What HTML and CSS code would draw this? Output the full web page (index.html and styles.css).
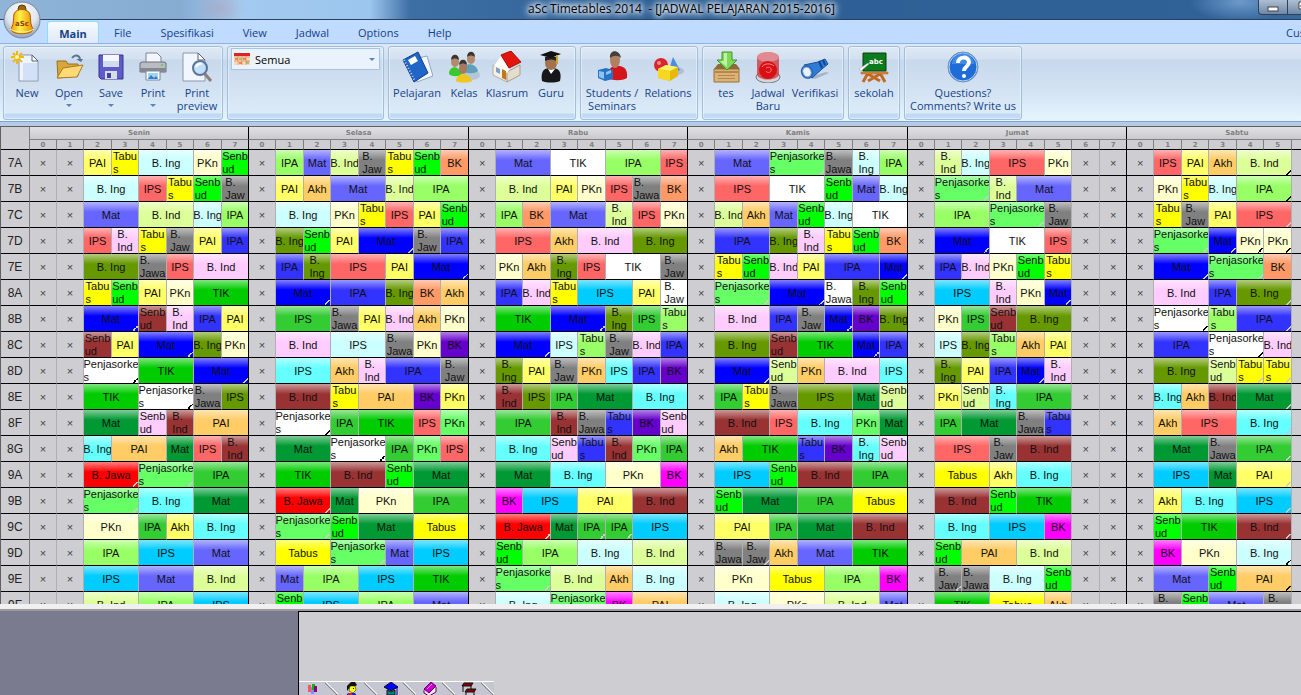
FILE: index.html
```html
<!DOCTYPE html>
<html lang="id">
<head>
  <meta charset="UTF-8">
  <meta name="viewport" content="width=device-width, initial-scale=1.0">
  <title>aSc Timetables 2014 - [JADWAL PELAJARAN 2015-2016]</title>
  <link rel="stylesheet" href="styles.css">
</head>
<body>
  <!-- Title bar -->
  <header class="titlebar">
    <span class="title">aSc Timetables 2014 &nbsp;- [JADWAL PELAJARAN 2015-2016]</span>
    <div class="window-buttons">
      <button aria-label="Minimize"><svg width="12" height="6"><rect x="1" y="1" width="10" height="4" fill="#fff" stroke="#444"/></svg></button>
      <button aria-label="Restore"><svg width="12" height="11"><path d="M3 1h8v7H3z M5 4h4v2H5z" fill="#fff" stroke="#444" fill-rule="evenodd"/></svg></button>
    </div>
  </header>

  <button class="app-button" aria-label="aSc">
    <svg width="38" height="38" viewBox="0 0 38 38">
      <defs>
        <radialGradient id="orb" cx=".5" cy=".3" r=".7"><stop offset="0" stop-color="#fff"/><stop offset=".6" stop-color="#dfe6ef"/><stop offset="1" stop-color="#8fa0b8"/></radialGradient>
        <linearGradient id="bell" x1="0" x2="1"><stop offset="0" stop-color="#f59a00"/><stop offset=".4" stop-color="#fff04a"/><stop offset="1" stop-color="#ee8a00"/></linearGradient>
      </defs>
      <circle cx="19" cy="19" r="18" fill="url(#orb)" stroke="#7a8597"/>
      <circle cx="19" cy="8" r="4" fill="#9a6a10" stroke="#5e3c00"/>
      <path d="M9 26C11 22 10 18 11 13C13 7 25 7 27 13C28 18 27 22 29 26C36 35 2 35 9 26Z" fill="url(#bell)" stroke="#b05a00"/>
      <path d="M7 28C14 32 25 32 31 28" fill="none" stroke="#fff3a0"/>
      <text x="19" y="25" text-anchor="middle" class="bell-text">aSc</text>
    </svg>
  </button>

  <!-- Ribbon tabs -->
  <nav class="tabs">
    <a href="#" class="tab active">Main</a>
    <a href="#" class="tab">File</a>
    <a href="#" class="tab">Spesifikasi</a>
    <a href="#" class="tab">View</a>
    <a href="#" class="tab">Jadwal</a>
    <a href="#" class="tab">Options</a>
    <a href="#" class="tab">Help</a>
    <a href="#" class="customize">Customize</a>
  </nav>

  <!-- Ribbon -->
  <div class="ribbon">
    <div class="group">
      <button class="tool">
        <svg viewBox="0 0 32 32"><path d="M8 4h13l6 6v20H8z" fill="#eef4ff" stroke="#8b97ad"/><path d="M12 12h14v17H12z" fill="#d3e1f8"/><path d="M21 4v6h6z" fill="#fff" stroke="#5a6270"/><path d="M6 0v13M0 6h13M2 2l9 9M11 2l-9 9" stroke="#f2b90c" stroke-width="2"/><circle cx="6" cy="6" r="2" fill="#fffbc0"/></svg>
        <span>New</span>
      </button>
      <button class="tool">
        <svg viewBox="0 0 32 32"><path d="M4 10h9l2 3h10v12L5 27z" fill="#d9a63a" stroke="#99701c"/><path d="M4 27L10 17l20-3-6 12z" fill="#ffd977" stroke="#a87a1e"/><path d="M19 7c3-4 7-3 8 1" fill="none" stroke="#5b7390" stroke-width="2"/><path d="M23 8h7l-2 3z" fill="#5b7390"/></svg>
        <span>Open</span><i class="caret"></i>
      </button>
      <button class="tool">
        <svg viewBox="0 0 32 32"><path d="M4 4h24v24H6l-2-2z" fill="#5f5cc9" stroke="#37348f"/><path d="M8 4h16v12H8z" fill="#f4f7ff"/><path d="M8 10h16v6H8z" fill="#cfdcf2"/><path d="M10 20h12v8H10z" fill="#d8dbe8"/><path d="M12 22h4v5h-4z" fill="#4543a0"/></svg>
        <span>Save</span><i class="caret"></i>
      </button>
      <button class="tool">
        <svg viewBox="0 0 32 32"><path d="M9 2h11l4 4v8H9z" fill="#f3f7fd" stroke="#7d8794"/><path d="M3 12l2-1h22l2 1v9H3z" fill="#b9bcc2" stroke="#6d7076"/><path d="M3 17h26v4H3z" fill="#85888f"/><path d="M9 20h14v9H9z" fill="#fff" stroke="#7d8794"/><path d="M11 22h10v6H11z" fill="#9fd4f5"/><path d="M11 28l3-4 3 3 2-2 2 3z" fill="#2f7fd0"/><circle cx="25" cy="14" r="1" fill="#56d040"/></svg>
        <span>Print</span><i class="caret"></i>
      </button>
      <button class="tool preview">
        <svg viewBox="0 0 32 32"><path d="M2 2h15l7 7v21H2z" fill="#f2f7ff" stroke="#8b97ad"/><path d="M17 2v7h7z" fill="#fff" stroke="#5a6270"/><path d="M24 23l6 7" stroke="#8a7f7c" stroke-width="3"/><circle cx="19" cy="17" r="7" fill="#bfdcfa" fill-opacity=".9" stroke="#5a7596" stroke-width="2"/><path d="M15 16c1-3 4-4 6-3" fill="none" stroke="#fff" stroke-width="2"/></svg>
        <span>Print<br>preview</span>
      </button>
    </div>

    <div class="group filter">
      <label class="combo">
        <svg viewBox="0 0 16 12"><path d="M0 0h16v12H0z" fill="#f6d9b8"/><path d="M0 0h16v3H0z" fill="#d8261e"/><path d="M1 5h3v2H1zM9 5h3v2H9zM5 9h3v2H5z" fill="#f0893c"/><path d="M5 5h3v2H5zM12 8h3v3h-3z" fill="#9fc77c"/><path d="M0 4h16M0 8h16M4 3v9M8 3v9M12 3v9" stroke="#e06a5a" stroke-width=".5"/></svg>
        <select aria-label="Filter"><option>Semua</option></select>
        <i class="caret"></i>
      </label>
    </div>

    <div class="group">
      <button class="tool pelajaran">
        <svg viewBox="0 0 32 32"><path d="M13 8l13-3 6 20-16 6z" fill="#f2f7fb" stroke="#8fa8bb"/><path d="M2 9L17 1l10 21-14 9z" fill="#1f66c6" stroke="#123f86"/><path d="M7 9l7-4 3 5-7 4z" fill="#fff"/><path d="M3 9l11 21" stroke="#b8d2f0" stroke-width="2" stroke-dasharray="1 2"/></svg>
        <span>Pelajaran</span>
      </button>
      <button class="tool">
        <svg viewBox="0 0 32 32"><ellipse cx="24" cy="24" rx="8" ry="5" fill="#8fa3b8" opacity=".4"/><path d="M15 20c0-9 13-9 15 0-3 3-12 3-15 0z" fill="#5f9fb8"/><ellipse cx="23" cy="8" rx="4" ry="5" fill="#b48a6c"/><path d="M19 6c0-7 8-7 8 0-3-2-5-2-8 0z" fill="#3a3531"/><path d="M1 23c0-9 10-9 13 0-3 3-10 3-13 0z" fill="#3bc72e"/><ellipse cx="7" cy="11" rx="4" ry="5" fill="#b48a6c"/><path d="M3 9c0-7 8-7 8 0-3-2-5-2-8 0z" fill="#3a3531"/><path d="M8 30c0-9 14-9 16 0-3 2-13 2-16 0z" fill="#f0c51c"/><ellipse cx="15" cy="17" rx="4" ry="6" fill="#a87a5c"/><path d="M11 14c0-7 8-7 8 0-3-2-5-2-8 0z" fill="#3a3531"/></svg>
        <span>Kelas</span>
      </button>
      <button class="tool klasrum">
        <svg viewBox="0 0 32 32"><path d="M2 14l14 7v10L2 24z" fill="#f6f1e6" stroke="#b5ad9b"/><path d="M16 21l13-7v10l-13 7z" fill="#e4ddcd" stroke="#a9a08c"/><path d="M3 15L10 5l9 13-3 4z" fill="#fffdf6"/><path d="M10 4l10-4 10 11-12 6z" fill="#e3160f" stroke="#a80d08"/><path d="M5 16l4 2v5l-4-2z" fill="#7fa3c8"/><path d="M11 18l4 2v9l-4-2z" fill="#c07a1c"/></svg>
        <span>Klasrum</span>
      </button>
      <button class="tool klasrum">
        <svg viewBox="0 0 32 32"><path d="M7 30c-2-12 5-14 9-12 4-2 12 0 9 12-5 2-13 2-18 0z" fill="#17171a"/><path d="M13 18l3 5 4-5z" fill="#fff"/><ellipse cx="16" cy="12" rx="6" ry="7" fill="#a2714e"/><path d="M10 6h12v4c-4-2-8-2-12 0z" fill="#222"/><path d="M5 4l11-4 10 3-10 4z" fill="#111"/><path d="M22 4v9" stroke="#caa52c" stroke-width="2"/></svg>
        <span>Guru</span>
      </button>
    </div>

    <div class="group">
      <button class="tool students">
        <svg viewBox="0 0 32 32"><path d="M12 27c-1-12 6-12 10-12 5 0 10 2 9 12-5 3-14 3-19 0z" fill="#d5151c"/><ellipse cx="19" cy="9" rx="5" ry="8" fill="#b18063"/><path d="M14 7c-1-9 10-9 11 0-3-3-7-3-11 0z" fill="#45403b"/><path d="M2 19l8-2 7 2v9l-8 2-7-3z" fill="#2673c4"/><path d="M3 20l5 1v7l-5-2zM10 21l5-2v3l-5 2z" fill="#8cc4ee"/></svg>
        <span>Students /<br>Seminars</span>
      </button>
      <button class="tool relations">
        <svg viewBox="0 0 32 32"><ellipse cx="24" cy="20" rx="8" ry="4" fill="#8fa3b8" opacity=".5"/><path d="M21 6l7 13c-4 3-9 2-11 0z" fill="#4a8ee0"/><circle cx="9" cy="14" r="7" fill="#d8262c"/><circle cx="7" cy="12" r="2" fill="#f08a8a"/><path d="M6 18l8-4 12 2v9l-8 5-12-3z" fill="#e6b90a"/><path d="M6 18l8-4 12 2-8 4z" fill="#fff06a"/><path d="M6 18l12 2v10l-12-3z" fill="#f8d720"/></svg>
        <span>Relations</span>
      </button>
    </div>

    <div class="group">
      <button class="tool">
        <svg viewBox="0 0 32 32"><path d="M4 18l4-5h18l4 5z" fill="#8d6a3c"/><path d="M4 18h25v13H4z" fill="#dcb377" stroke="#96703a"/><path d="M5 20h23v2H5zM8 24h17v1H8zM8 27h17v1H8z" fill="#b3884a"/><path d="M12 1h10v8h5L17 19 7 9h5z" fill="#7fd85a" stroke="#3a9a25"/><path d="M14 2h3v14l-7-6h4z" fill="#c0f2a0"/></svg>
        <span>tes</span>
      </button>
      <button class="tool">
        <svg viewBox="0 0 32 32"><ellipse cx="16" cy="26" rx="12" ry="6" fill="#d4d6da" stroke="#767a80"/><path d="M5 6c2-6 20-6 22 0v18c-3 6-19 6-22 0z" fill="#cf3a44" opacity=".8"/><ellipse cx="16" cy="6" rx="11" ry="5" fill="#df8b91"/><circle cx="16" cy="19" r="9" fill="#d90f14"/><path d="M10 16c2-4 9-4 12-1" stroke="#ff8d8d" fill="none"/><path d="M14 17c3-2 6 0 5 3-1 2-4 2-5 0" stroke="#f77" fill="none"/></svg>
        <span>Jadwal<br>Baru</span>
      </button>
      <button class="tool verifikasi">
        <svg viewBox="0 0 32 32"><path d="M8 27l19-6 3 1-14 6z" fill="#7c8da3" opacity=".5"/><path d="M5 14l14-3 7-3 3 5-6 5-10 9z" fill="#2f7bd6" stroke="#174f9c"/><path d="M20 10l3 7M24 9l2 5" stroke="#12468e" stroke-width="2"/><ellipse cx="8" cy="21" rx="6" ry="7" transform="rotate(-24 8 21)" fill="#2467b8"/><ellipse cx="8" cy="21" rx="4" ry="5" transform="rotate(-24 8 21)" fill="#e7f2fa" stroke="#87a8c4"/></svg>
        <span>Verifikasi</span>
      </button>
    </div>

    <div class="group">
      <button class="tool sekolah">
        <svg viewBox="0 0 32 32"><path d="M10 22l-5 9M22 22l5 9M10 30l12-7M22 30l-12-7" stroke="#c26a22" stroke-width="3"/><path d="M5 2h23v18H5z" fill="#0c7a1d" stroke="#0a3e10"/><path d="M3 21h27v2H3z" fill="#d98a3c" stroke="#a35c1c" stroke-width=".5"/><path d="M1 18l9-6 1 1-8 7z" fill="#fff" stroke="#999" stroke-width=".5"/><text x="18" y="13" text-anchor="middle" class="board-text">abc</text></svg>
        <span>sekolah</span>
      </button>
    </div>

    <div class="group">
      <button class="tool questions">
        <svg viewBox="0 0 32 32"><circle cx="16" cy="16" r="15" fill="#1d6cd8" stroke="#6f8fb8"/><circle cx="16" cy="16" r="14" fill="none" stroke="#b9d6f6"/><path d="M5 13a11 11 0 0 1 22 0z" fill="#5c9df0" opacity=".6"/><path d="M11 12c0-7 11-7 11-1 0 5-5 4-5 9" fill="none" stroke="#fff" stroke-width="4"/><circle cx="17" cy="25" r="2" fill="#fff"/></svg>
        <span>Questions?<br>Comments? Write us</span>
      </button>
    </div>
  </div>

  <!-- Timetable -->
  <main class="sheet">
    <table id="timetable"></table>
  </main>

  <!-- Bottom panels -->
  <footer class="bottom">
    <div class="detail"></div>
    <div class="tray">
      <div class="tray-tabs">
        <button aria-label="Cards"><svg width="12" height="12" viewBox="0 0 12 12"><path d="M1 3h3v7H1z" fill="#f55"/><path d="M4 5h3v7H4z" fill="#88f"/><path d="M5 2h3v6H5z" fill="#0b0"/><path d="M7 4h3v6H7z" fill="#808"/></svg></button>
        <button aria-label="Classes"><svg width="14" height="14" viewBox="0 0 14 14"><path d="M2 4l4-4h4l2 3-3 2H5L2 9z" fill="#111"/><path d="M5 4h5l1 4-3 3-4-2z" fill="#ff0" stroke="#111" stroke-width=".5"/><path d="M8 6h1v1H8z"/><path d="M1 14l2-3h7l2 3z" fill="#22c"/><path d="M3 11h4v3H4z" fill="#d22"/></svg></button>
        <button aria-label="Teachers"><svg width="16" height="14" viewBox="0 0 16 14"><path d="M1 5l7-5 7 5-7 4z" fill="#00f" stroke="#111"/><path d="M4 8l4 2 4-2v5H4z" fill="#088" stroke="#111"/><path d="M14 5v8" stroke="#00a"/></svg></button>
        <button aria-label="Subjects"><svg width="14" height="14" viewBox="0 0 14 14"><path d="M1 8l7-7 5 4v5l-7 4-5-3z" fill="#eee" stroke="#606"/><path d="M1 7l7-7 5 4-7 7z" fill="#c0c" stroke="#606"/><path d="M4 7l5-5" stroke="#f8f"/></svg></button>
        <button aria-label="Classrooms"><svg width="16" height="14" viewBox="0 0 16 14"><path d="M3 1h9l-2 3H1zM6 7h9l-2 3H4z" fill="#800" stroke="#111"/><path d="M2 4v6M10 4v3M5 10v4M13 10v4" stroke="#111"/></svg></button>
      </div>
    </div>
  </footer>

  <script src="script.js"></script>
</body>
</html>
```
FILE: styles.css
```css
* {
  box-sizing: border-box;
}

body {
  margin: 0;
  height: 100vh;
  display: flex;
  flex-direction: column;
  overflow: hidden;
  position: relative;
  font-family: "Open Sans", "Noto Sans", sans-serif;
  font-size: 11px;
  color: #15428b;
  background-color: #b5cae5;
}

button {
  font: inherit;
  color: inherit;
  padding: 0;
  border: none;
  background: none;
}

a {
  color: inherit;
  text-decoration: none;
}

/* Title bar */
.titlebar {
  flex: none;
  height: 20px;
  display: flex;
  justify-content: center;
  position: relative;
  border-bottom: 1px solid #2c3e58;
  background:
    radial-gradient(ellipse 26px 16px at 220px 8px, rgba(190, 150, 170, 0.4), transparent),
    radial-gradient(ellipse 50px 20px at 1240px 2px, rgba(150, 190, 235, 0.6), transparent),
    linear-gradient(90deg, #8fb4d8 0, #86acd2 180px, #a3caf0 240px, #9cc6ee 370px, #3d6fa5 410px, #2d5f96 700px, #306298 1230px, #376a9f 100%);
}

.title {
  color: #000;
  font-size: 12px;
  line-height: 18px;
  padding-left: 62px;
  text-shadow: 0 0 4px #fff, 0 0 6px #fff, 0 0 8px #dce9f7, 0 0 10px #dce9f7;
}

.window-buttons {
  position: absolute;
  top: 0;
  right: 0;
  width: 43px;
  height: 15px;
  display: flex;
  overflow: hidden;
  border: 1px solid #333f52;
  border-width: 0 0 1px 1px;
  border-radius: 0 0 0 4px;
  background: linear-gradient(#aebfd3, #6d87a8);
}

.window-buttons button {
  flex: none;
  width: 29px;
  border-right: 1px solid #333f52;
}

.app-button {
  position: absolute;
  top: 1px;
  left: 3px;
  z-index: 2;
  width: 38px;
  height: 38px;
}

.app-button svg {
  display: block;
}

.bell-text {
  font: bold 7px "DejaVu Sans", sans-serif;
  fill: #8a4300;
}

/* Tabs */
.tabs {
  flex: none;
  height: 24px;
  display: flex;
  gap: 1px;
  padding-left: 47px;
  background-color: #bfdbff;
  border-bottom: 1px solid #8db2e3;
  line-height: 25px;
  overflow: hidden;
}

.tab {
  padding: 0 14px;
}

.tab.active {
  width: 52px;
  margin-top: 1px;
  padding: 0;
  line-height: 23px;
  text-align: center;
  font-weight: bold;
  border: 1px solid #8edcf5;
  border-bottom: none;
  border-radius: 3px 3px 0 0;
  background: linear-gradient(#f5faff, #dfe9f6);
}

.customize {
  margin-left: auto;
  width: 15px;
  overflow: hidden;
}

/* Ribbon */
.ribbon {
  flex: none;
  height: 78px;
  display: flex;
  gap: 4px;
  padding: 2px 3px 1px;
  border-bottom: 1px solid #7fa5d5;
  background: linear-gradient(#dde8f5, #d2e0f0 15px, #c7d8ed 16px, #d4e4f4 50px, #e6f6ff);
}

.group {
  flex: none;
  display: flex;
  align-items: flex-start;
  padding: 2px;
  border: 1px solid #9fbfdd;
  border-radius: 3px;
  box-shadow: inset 0 0 0 1px rgba(255, 255, 255, 0.4);
  background: linear-gradient(#dfe9f5, #d3e0f0 12px, #c8d8ec 13px, #dcebf8 66px, #bed9f3 67px, #c7ddf3);
}

.tool {
  flex: none;
  width: 42px;
  display: flex;
  flex-direction: column;
  align-items: center;
  line-height: 13px;
  white-space: nowrap;
}

.tool svg {
  width: 32px;
  height: 32px;
  margin: 2px 0 3px;
}

.preview {
  width: 46px;
}

.pelajaran {
  width: 52px;
}

.klasrum {
  width: 44px;
}

.students {
  width: 58px;
}

.relations {
  width: 54px;
}

.verifikasi {
  width: 52px;
}

.sekolah {
  width: 46px;
}

.questions {
  width: 112px;
}

.caret {
  width: 0;
  height: 0;
  border: 3px solid transparent;
  border-top-color: #5b84bd;
  border-bottom: none;
}

.tool .caret {
  margin-top: 5px;
}

.filter {
  width: 157px;
  padding: 1px 3px;
}

.combo {
  flex: 1;
  height: 22px;
  display: flex;
  align-items: center;
  gap: 5px;
  padding: 0 4px 0 2px;
  border: 1px solid #a9c3e3;
  background-color: #eaf2fb;
}

.combo svg {
  width: 16px;
  height: 12px;
}

.combo select {
  flex: 1;
  appearance: none;
  border: none;
  padding: 0;
  font: inherit;
  color: #000;
  background: none;
}

.board-text {
  font: bold 7px "DejaVu Sans", sans-serif;
  fill: #fff;
}

/* Timetable */
.sheet {
  flex: 1;
  min-height: 0;
  margin-top: 4px;
  overflow: hidden;
  border-top: 1px solid #606060;
  border-left: 1px solid #606060;
  background-color: #ceced2;
}

table {
  width: 1346px;
  table-layout: fixed;
  border-collapse: separate;
  border-spacing: 0;
  font-family: "Liberation Sans", Arial, sans-serif;
  font-size: 11px;
  line-height: 13px;
}

th,
td {
  padding: 0;
  border-right: 1px solid #b0b0b4;
  border-bottom: 1px solid #000;
}

.day,
.period,
.corner {
  font: bold 7px "DejaVu Sans", sans-serif;
  line-height: 8px;
  color: #808080;
  border-right-color: #808080;
}

.day {
  height: 13px;
  border-bottom-color: #808080;
  background: linear-gradient(#e2e2e5, #cacace);
}

.period {
  height: 10px;
}

.class-name {
  padding-top: 2px;
  font-weight: normal;
  font-size: 12px;
  color: #222;
  border-right-color: #808080;
}

.day-end {
  border-right-color: #000;
}

.slot {
  position: relative;
  height: 25px;
  display: flex;
  align-items: center;
  justify-content: center;
  padding-top: 2px;
  overflow: hidden;
  white-space: pre;
  text-align: left;
  color: #444;
}

.card {
  color: #111;
  background-image: linear-gradient(rgba(255, 255, 255, 0.5), rgba(255, 255, 255, 0) 10px);
}

.two-lines {
  padding-top: 0;
}

.light::after,
.dark::after {
  content: "";
  position: absolute;
  right: 0;
  bottom: 0;
  width: 5px;
  height: 5px;
  background: linear-gradient(135deg, transparent 40%, #ccc 40%, #ccc 60%, transparent 60%);
}

.dark::after {
  background: linear-gradient(135deg, transparent 40%, #000 40%, #000 60%, transparent 60%);
}

/* Bottom panels */
.bottom {
  flex: none;
  height: 91px;
  display: flex;
  border-top: 5px solid #f0f0f0;
  background-color: #ceced2;
}

.detail {
  width: 298px;
  border-top: 2px solid #9a9a9e;
  background-color: #7b7b8f;
}

.tray {
  flex: 1;
  display: flex;
  align-items: flex-end;
  margin-top: 2px;
  border-top: 1px solid #000;
  border-left: 1px solid #000;
  box-shadow: 0 -2px #9a9a9e;
}

.tray-tabs {
  display: flex;
  height: 14px;
  border-top: 1px solid #fff;
  background-color: #c6c6d2;
}

.tray-tabs button {
  width: 39px;
  display: flex;
  justify-content: center;
  padding-right: 12px;
  background: linear-gradient(to top right, transparent 46%, #808080 46%, #fff 54%, transparent 54%) right top / 13px 13px no-repeat;
}
```
FILE: script.js
```js
const days = ["Senin", "Selasa", "Rabu", "Kamis", "Jumat", "Sabtu"];
const periods = 8;

const subjects = {
  PAI: "PAI", PKN: "PKn", IPA: "IPA", IPS: "IPS", MAT: "Mat", BK: "BK", AKH: "Akh", TIK: "TIK",
  ING: "B. Ing", IN2: "B.\nIng", IND: "B. Ind", ID2: "B.\nInd",
  JAW: "B.\nJaw", JWA: "B.\nJawa", TAB: "Tabu\ns", SEN: "Senb\nud", PEN: "Penjasorke\ns"
};
const wide = { JAW: "B. Jawa", TAB: "Tabus" };

const colors = {
  y: "#ffff66", Y: "#ffff00", c: "#ccffff", C: "#66ffff", k: "#ffffcc", G: "#00ff00",
  l: "#99ff66", m: "#6666ff", d: "#ddff99", g: "#808080", o: "#ff9966", a: "#ffcc66",
  r: "#ff6666", R: "#ff0000", p: "#66ff66", P: "#ffccff", B: "#0000ff", b: "#3333ff",
  O: "#669900", T: "#00cc00", t: "#33cc33", n: "#993333", s: "#00ccff", v: "#6600cc",
  D: "#009933", M: "#ff00ff", w: "#ffffff"
};

// SUBJECT-colour[length][corner mark], days separated by |
const lessons = {
  "7A": "PAI-y TAB-Y ING-c2 PKN-k SEN-G | IPA-l MAT-m IND-d JAW-g TAB-Y SEN-G BK-o | MAT-m2 TIK-w2 IPA-l2 IPS-r | MAT-m2 PEN-p2/ JWA-g IN2-c IPA-l | ID2-d ING-c IPS-r2 PKN-k | IPS-r PAI-y AKH-a IND-d2+",
  "7B": "ING-c2 IPS-r TAB-Y SEN-G JAW-g | PAI-y AKH-a MAT-m2 IND-d IPA-l2 | IND-d2 PAI-y PKN-k IPS-r JWA-g BK-o | IPS-r2 TIK-w2 SEN-G MAT-m ING-c | PEN-p2/ ID2-d MAT-m2 | PKN-k TAB-Y ING-c IPA-l2+",
  "7C": "MAT-m2 IND-d2 ING-c IPA-l | ING-c2 PKN-k TAB-Y IPS-r PAI-y SEN-G | IPA-l BK-o MAT-m2 ID2-d IPS-r PKN-k | IND-d AKH-a MAT-m SEN-G ING-c TIK-w2 | IPA-l2 PEN-p2/ JAW-g | TAB-Y JAW-g PAI-y IPS-r2/",
  "7D": "IPS-r ID2-P TAB-Y JAW-g PAI-y IPA-b | ING-O SEN-G PAI-y MAT-B2/ JAW-g IPA-b | IPS-r2 AKH-a IND-P2 ING-O2 | IPA-b2 ING-O ID2-P TAB-Y SEN-G BK-o | MAT-B2/ TIK-w2 IPS-r | PEN-p2/ MAT-B/ PKN-k+ PKN-k+",
  "7E": "ING-O2 JWA-g IPS-r IND-P2 | IPA-b IN2-O IPS-r2 PAI-y MAT-B2/ | PKN-k AKH-a IN2-O IPS-r TIK-w2 JAW-g | TAB-Y SEN-G IND-P PAI-y IPA-b2 MAT-B/ | IPA-b IND-P PKN-k SEN-G TAB-Y | MAT-B2/ PEN-p2/ BK-o",
  "8A": "TAB-Y SEN-G PAI-y PKN-k TIK-T2 | MAT-B2/ IPA-b2 ING-O BK-o AKH-a | IPA-b IND-P TAB-Y IPS-s2 PAI-y JAW-w | PEN-p2/ MAT-B2/ JWA-w IN2-O SEN-G | IPS-s2 ID2-P PKN-k MAT-B/ | IND-P2 IPA-b ING-O2/",
  "8B": "MAT-B2/ SEN-n ID2-P IPA-b PAI-y | IPS-t2 JWA-g PAI-y IND-P AKH-a PKN-k | TIK-T2 MAT-B2/ IN2-O IPS-t TAB-l | IND-P2 IPA-b JAW-g MAT-B/ BK-v ING-O | PKN-k IPS-t SEN-n ING-O2 | PEN-w2+ TAB-l IPA-b2/",
  "8C": "SEN-n PAI-y MAT-B2/ ING-O PKN-k | IND-P2 IPS-c2 JWA-g PKN-k BK-v | MAT-B2/ IPS-c TAB-l JAW-g IND-P IPA-b | ING-O2 SEN-n TIK-T2 MAT-B/ IPA-b | IPS-c ING-O TAB-l AKH-a PAI-y | IPA-b2 PEN-w2+ IND-P",
  "8D": "PEN-w2+ TIK-T2 MAT-B2/ | IPS-C2 AKH-a ID2-P IPA-b2 JAW-g | IN2-O PAI-y JAW-g PKN-a IPS-C IPA-b BK-v | MAT-B2/ SEN-d PKN-a IND-P2 IPS-C | IN2-O PAI-y IPA-b MAT-B/ ID2-P | ING-O2 SEN-d TAB-Y/ TAB-Y/",
  "8E": "TIK-T2 PEN-w2+ JWA-g IPS-O | IND-n2 TAB-Y PAI-a2 BK-v PKN-y | ID2-n IPS-O IPA-t MAT-D2 ING-C2 | IPA-t TAB-Y JWA-g IPS-O2 MAT-D SEN-d | PKN-y SEN-d IN2-C IPA-t2 | ING-C AKH-a IND-n MAT-D2/",
  "8F": "MAT-D2 SEN-P ID2-n PAI-a2 | PEN-w2+ IPA-t TIK-T2 IPS-r PKN-p | IPA-t2 ID2-n JWA-g TAB-b BK-v SEN-P | IND-n2 IPS-r ING-C2 PKN-p MAT-D | IPA-t MAT-D2 JWA-g TAB-b | AKH-a IPS-r2 ING-C2/",
  "8G": "ING-C PAI-a2 MAT-D IPS-r ID2-n | MAT-D2 PEN-w2+ IPA-t PKN-p IPS-r | ING-C2 SEN-P TAB-b ID2-n PKN-p IPA-t | AKH-a TIK-T2 TAB-b BK-v IN2-C SEN-P | IPS-r2 JAW-g IND-n2 | MAT-D2 JWA-g IPA-t2/",
  "9A": "JAW-R2/ PEN-p2/ IPA-t2 | TIK-T2 IND-n2 SEN-G MAT-D2 | MAT-D2 ING-C2 PKN-k2 BK-M | IPS-s2 SEN-G IND-n2 IPA-t2 | TAB-Y2 AKH-y ING-C2 | IPS-s2 MAT-D PAI-y2/",
  "9B": "PEN-p2/ ING-C2 MAT-D2 | JAW-R2/ MAT-D PKN-k2 IPA-t2 | BK-M IPS-s2 PAI-y2 IND-n2 | SEN-G MAT-D2 IPA-t2 TAB-Y2 | IND-n2 SEN-G TIK-T2 | AKH-y ING-C2 IPS-s2/",
  "9C": "PKN-k2 IPA-t AKH-y ING-C2 | PEN-p2/ SEN-G MAT-D2 TAB-Y2 | JAW-R2/ MAT-D IPA-t/ IPA-t/ IPS-s2 | PAI-y2 IPA-t MAT-D2 IND-n2 | ING-C2 IPS-s2 BK-M | SEN-G TIK-T2 IND-n2/",
  "9D": "IPA-l2 IPS-s2 MAT-m2 | TAB-Y2 PEN-p2/ MAT-m IPS-s2 | SEN-G IPA-l2 ING-c2 IND-d2 | JWA-g JAW-g/ AKH-a MAT-m2 TIK-T2 | SEN-G PAI-a2 IND-d2 | BK-M PKN-k2 ING-c2+",
  "9E": "IPS-s2 MAT-m2 IND-d2 | MAT-m IPA-l2 IPS-s2 TIK-T2 | PEN-p2/ IND-d2 AKH-a ING-c2 | PKN-k2 TAB-Y2 IPA-l2 BK-M | JAW-g/ JWA-g ING-c2 SEN-G | MAT-m2 SEN-G PAI-a2+",
  "9F": "IND-d2 IPA-l2 IPS-s2 | SEN-G IPS-s2 IPA-l2 MAT-m2 | ING-c2 PEN-p2/ BK-M PAI-a2 | ING-c2 PKN-k2 IND-d2 MAT-m | TIK-T2 TAB-Y2 AKH-a | JAW-g SEN-G MAT-m2 JAW-g"
};

function cell(code, end) {
  const edge = end ? ' class="day-end"' : "";
  if (code === "x") {
    return `<td${edge}><div class="slot">×</div></td>`;
  }
  const [, subject, color, length, mark] = code.match(/^(\w+)-([a-zA-Z])(\d?)([/+]?)$/);
  const span = Number(length || 1);
  const name = (span > 1 && wide[subject]) || subjects[subject];
  const lines = name.includes("\n") ? " two-lines" : "";
  const corner = { "/": " light", "+": " dark" }[mark] || "";
  return `<td${edge} colspan="${span}"><div class="slot card${lines}${corner}" style="background-color:${colors[color]}"><span>${name}</span></div></td>`;
}

function row(name) {
  const cells = lessons[name].split("|").map((text, day) => {
    const codes = text.trim().split(" ");
    codes.unshift("x");
    if (day === 0) codes.unshift("x");
    if (day > 3) codes.push("x", "x");
    return codes.map((code, i) => cell(code, i === codes.length - 1)).join("");
  });
  return `<tr><th class="class-name">${name}</th>${cells.join("")}</tr>`;
}

// Whole-pixel columns that share out the width of the week
const total = days.length * periods;
const edgeAt = (n) => Math.floor((n * 1317) / total);
let cols = '<col style="width:29px">';
let numbers = "";
for (let i = 0; i < total; i++) {
  cols += `<col style="width:${edgeAt(i + 1) - edgeAt(i)}px">`;
  const p = i % periods;
  numbers += `<th class="period${p === periods - 1 ? " day-end" : ""}">${p}</th>`;
}

document.getElementById("timetable").innerHTML = `
  <colgroup>${cols}</colgroup>
  <thead>
    <tr><th class="corner" rowspan="2"></th>${days.map((d) => `<th class="day day-end" colspan="${periods}">${d}</th>`).join("")}</tr>
    <tr>${numbers}</tr>
  </thead>
  <tbody>${Object.keys(lessons).map(row).join("")}</tbody>`;
```
